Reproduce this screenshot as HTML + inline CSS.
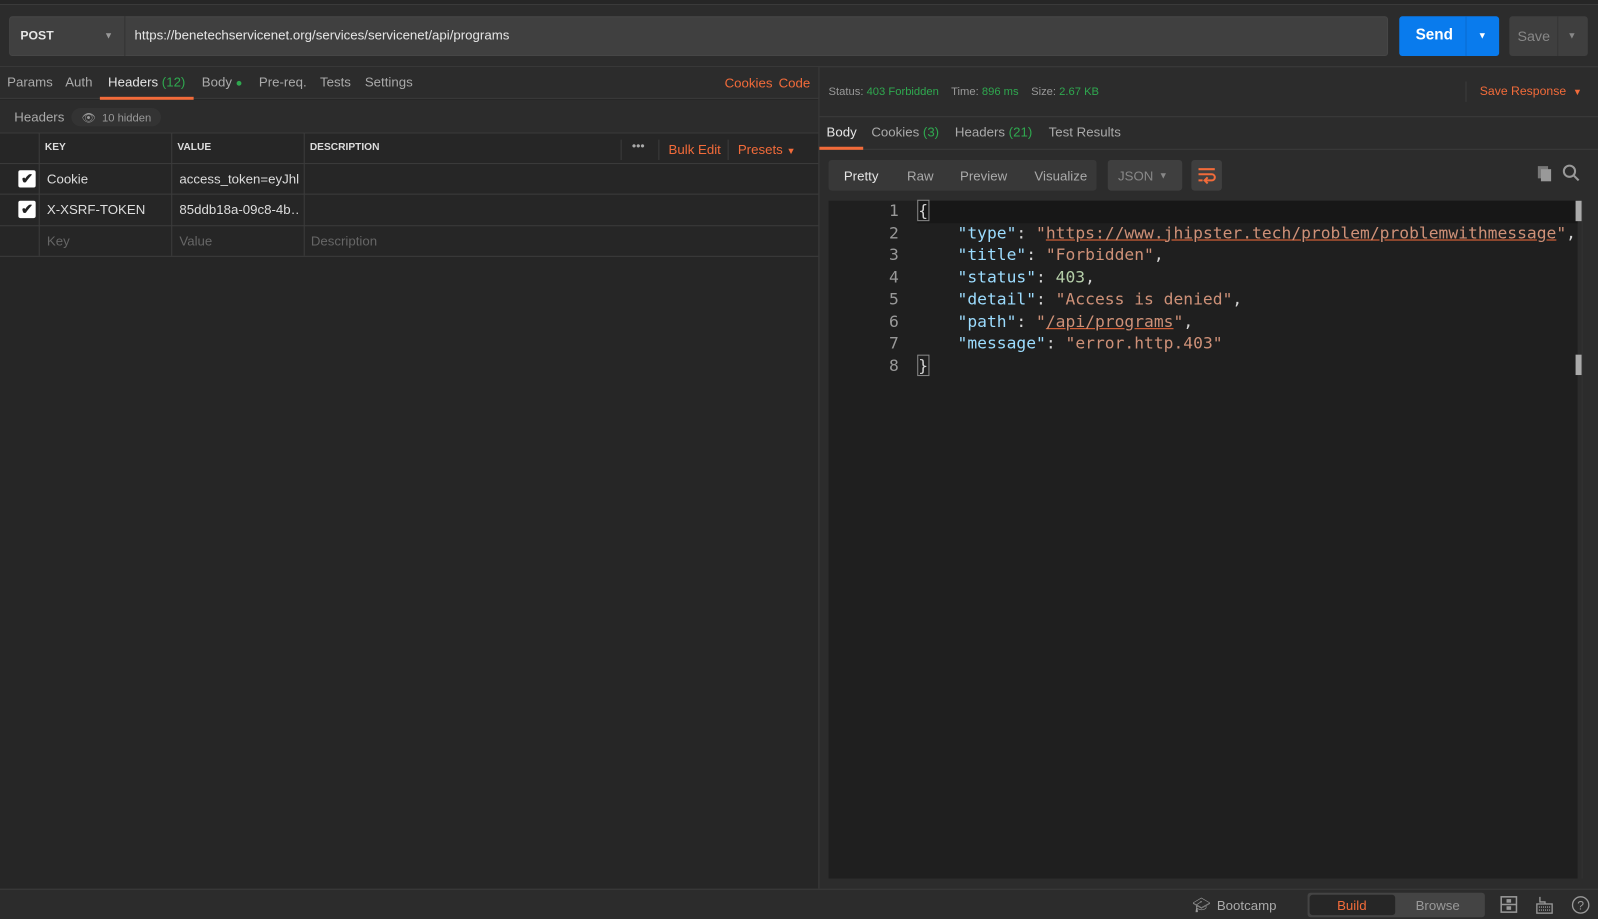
<!DOCTYPE html>
<html><head><style>
*{box-sizing:border-box;margin:0;padding:0}
html,body{width:1598px;height:919px;overflow:hidden;background:#2c2c2c}
#w{width:1568px;height:902px;transform:scale(1.01913);transform-origin:0 0;position:relative;font-family:"Liberation Sans",sans-serif;font-size:13px;color:#d0d0d0}
.a{position:absolute}
.or{color:#f26b3a}.gr{color:#2fa84f}
.mono{font-family:"DejaVu Sans Mono","Liberation Mono",monospace}
</style></head><body><div id="w">
<div class="a" style="left:0;top:0;width:1568px;height:5px;background:#262626;border-bottom:1px solid #3c3c3c"></div>
<div class="a" style="left:9px;top:16px;width:1353px;height:39px;background:#404040;border-radius:3px;border:1px solid #464646"></div>
<div class="a" style="left:122px;top:16px;width:1px;height:39px;background:#333"></div>
<div class="a" style="left:20px;top:28px;font-weight:bold;font-size:12px;color:#e6e6e6">POST</div>
<div class="a" style="left:102px;top:30px;font-size:9px;color:#999">▼</div>
<div class="a" style="left:132px;top:27px;color:#e6e6e6;font-size:13px">https://benetechservicenet.org/services/servicenet/api/programs</div>
<div class="a" style="left:1373px;top:16px;width:98px;height:39px;background:#097bed;border-radius:3px"></div>
<div class="a" style="left:1438px;top:16px;width:1px;height:39px;background:#0a6bd0"></div>
<div class="a" style="left:1389px;top:26px;font-size:15px;font-weight:bold;color:#fff">Send</div>
<div class="a" style="left:1450px;top:30px;font-size:9px;color:#fff">▼</div>
<div class="a" style="left:1481px;top:16px;width:77px;height:39px;background:#3f3f3f;border-radius:3px"></div>
<div class="a" style="left:1528px;top:16px;width:1px;height:39px;background:#353535"></div>
<div class="a" style="left:1489px;top:27px;font-size:14px;color:#888">Save</div>
<div class="a" style="left:1538px;top:30px;font-size:9px;color:#888">▼</div>
<div class="a" style="left:0;top:65px;width:1568px;height:1px;background:#3c3c3c"></div>
<div class="a" style="left:0;top:66px;width:803px;height:806px;background:#262626"></div>
<div class="a" style="left:0;top:66px;width:803px;height:31px;background:#2c2c2c;border-bottom:1px solid #3c3c3c"></div>
<div class="a" style="left:7px;top:73px;color:#aaa">Params</div>
<div class="a" style="left:64px;top:73px;color:#aaa">Auth</div>
<div class="a" style="left:106px;top:73px;color:#e6e6e6">Headers <span class="gr">(12)</span></div>
<div class="a" style="left:98px;top:95px;width:92px;height:3px;background:#f26b3a"></div>
<div class="a" style="left:198px;top:73px;color:#aaa">Body <span class="gr" style="font-size:11px">●</span></div>
<div class="a" style="left:254px;top:73px;color:#aaa">Pre-req.</div>
<div class="a" style="left:314px;top:73px;color:#aaa">Tests</div>
<div class="a" style="left:358px;top:73px;color:#aaa">Settings</div>
<div class="a or" style="left:711px;top:74px">Cookies</div>
<div class="a or" style="left:764px;top:74px">Code</div>
<div class="a" style="left:0;top:98px;width:803px;height:32px;background:#2c2c2c"></div>
<div class="a" style="left:14px;top:107px;color:#aaa">Headers</div>
<div class="a" style="left:70px;top:106px;width:88px;height:18px;border-radius:9px;background:#333;color:#999;font-size:11px;padding:3px 0 0 10px">👁︎ &nbsp;10 hidden</div>
<div class="a" style="left:0;top:130px;width:803px;height:122px;border-top:1px solid #3c3c3c"></div>
<div class="a" style="left:0;top:160px;width:803px;height:1px;background:#3c3c3c"></div>
<div class="a" style="left:0;top:190px;width:803px;height:1px;background:#3c3c3c"></div>
<div class="a" style="left:0;top:221px;width:803px;height:1px;background:#3c3c3c"></div>
<div class="a" style="left:0;top:251px;width:803px;height:1px;background:#3c3c3c"></div>
<div class="a" style="left:38px;top:130px;width:1px;height:121px;background:#3c3c3c"></div>
<div class="a" style="left:168px;top:130px;width:1px;height:121px;background:#3c3c3c"></div>
<div class="a" style="left:298px;top:130px;width:1px;height:121px;background:#3c3c3c"></div>
<div class="a" style="left:44px;top:139px;font-size:10px;font-weight:bold;color:#ddd">KEY</div>
<div class="a" style="left:174px;top:139px;font-size:10px;font-weight:bold;color:#ddd">VALUE</div>
<div class="a" style="left:304px;top:139px;font-size:10px;font-weight:bold;color:#ddd">DESCRIPTION</div>
<div class="a" style="left:609px;top:137px;width:1px;height:20px;background:#3c3c3c"></div>
<div class="a" style="left:620px;top:136px;color:#aaa;font-size:12px">•••</div>
<div class="a" style="left:646px;top:137px;width:1px;height:20px;background:#3c3c3c"></div>
<div class="a or" style="left:656px;top:139px">Bulk Edit</div>
<div class="a" style="left:714px;top:137px;width:1px;height:20px;background:#3c3c3c"></div>
<div class="a or" style="left:724px;top:139px">Presets <span style="font-size:9px">▼</span></div>
<div class="a" style="left:18px;top:167px;width:17px;height:17px;background:#fff;border-radius:2px;color:#222;font-size:14px;font-weight:bold;text-align:center;line-height:17px">✔</div>
<div class="a" style="left:18px;top:197px;width:17px;height:17px;background:#fff;border-radius:2px;color:#222;font-size:14px;font-weight:bold;text-align:center;line-height:17px">✔</div>
<div class="a" style="left:46px;top:168px;color:#ddd">Cookie</div>
<div class="a" style="left:176px;top:168px;color:#ddd;width:118px;overflow:hidden;white-space:nowrap">access_token=eyJhl…</div>
<div class="a" style="left:46px;top:198px;color:#ddd">X-XSRF-TOKEN</div>
<div class="a" style="left:176px;top:198px;color:#ddd;width:118px;overflow:hidden;white-space:nowrap">85ddb18a-09c8-4b…</div>
<div class="a" style="left:46px;top:229px;color:#666">Key</div>
<div class="a" style="left:176px;top:229px;color:#666">Value</div>
<div class="a" style="left:305px;top:229px;color:#666">Description</div>
<div class="a" style="left:803px;top:66px;width:1px;height:806px;background:#3c3c3c"></div>
<div class="a" style="left:813px;top:84px;font-size:11px;color:#999">Status: <span class="gr">403 Forbidden</span>&nbsp;&nbsp;&nbsp; Time: <span class="gr">896 ms</span>&nbsp;&nbsp;&nbsp; Size: <span class="gr">2.67 KB</span></div>
<div class="a" style="left:1438px;top:80px;width:1px;height:20px;background:#3c3c3c"></div>
<div class="a or" style="left:1452px;top:82px;font-size:12px">Save Response &nbsp;<span style="font-size:9px">▼</span></div>
<div class="a" style="left:804px;top:114px;width:764px;height:1px;background:#3c3c3c"></div>
<div class="a" style="left:804px;top:146px;width:764px;height:1px;background:#3c3c3c"></div>
<div class="a" style="left:811px;top:122px;color:#e6e6e6">Body</div>
<div class="a" style="left:804px;top:144px;width:43px;height:3px;background:#f26b3a"></div>
<div class="a" style="left:855px;top:122px;color:#aaa">Cookies <span class="gr">(3)</span></div>
<div class="a" style="left:937px;top:122px;color:#aaa">Headers <span class="gr">(21)</span></div>
<div class="a" style="left:1029px;top:122px;color:#aaa">Test Results</div>
<div class="a" style="left:813px;top:157px;width:263px;height:30px;background:#383838;border-radius:3px"></div>
<div class="a" style="left:828px;top:165px;color:#e6e6e6">Pretty</div>
<div class="a" style="left:890px;top:165px;color:#aaa">Raw</div>
<div class="a" style="left:942px;top:165px;color:#aaa">Preview</div>
<div class="a" style="left:1015px;top:165px;color:#aaa">Visualize</div>
<div class="a" style="left:1087px;top:157px;width:73px;height:30px;background:#3f3f3f;border-radius:3px"></div>
<div class="a" style="left:1097px;top:165px;color:#888">JSON</div>
<div class="a" style="left:1137px;top:167px;font-size:9px;color:#888">▼</div>
<div class="a" style="left:1169px;top:157px;width:30px;height:30px;background:#3f3f3f;border-radius:3px"></div>
<svg class="a" style="left:1174px;top:162px" width="20" height="20" viewBox="0 0 20 20" fill="none" stroke="#f26b3a" stroke-width="2"><path d="M2 4h16M2 9h13a3 3 0 0 1 0 6H9M11 12l-3 3 3 3M2 15h4"/></svg>
<svg class="a" style="left:1508px;top:162px" width="16" height="16"><rect x="1" y="1" width="10" height="12" fill="#777"/><rect x="4" y="4" width="10" height="12" fill="#999"/></svg>
<svg class="a" style="left:1533px;top:161px" width="17" height="17" fill="none" stroke="#999" stroke-width="2"><circle cx="7" cy="7" r="5.5"/><path d="M11 11l5 5"/></svg>
<div class="a" style="left:813px;top:197px;width:735px;height:665px;background:#1f1f1f"></div>
<div class="a" style="left:900px;top:197px;width:648px;height:22px;background:#171717"></div>
<div class="a" style="left:1546px;top:197px;width:6px;height:20px;background:#aaa"></div>
<div class="a" style="left:1546px;top:348px;width:6px;height:20px;background:#aaa"></div>
<div class="a" style="left:1552px;top:197px;width:1px;height:665px;background:#333"></div>
<pre class="a mono" style="left:840px;top:196px;font-size:16px;line-height:21.7px;color:#999;text-align:right;width:42px">1
2
3
4
5
6
7
8</pre>
<pre class="a mono" style="left:901px;top:196px;font-size:16px;line-height:21.7px;color:#d4d4d4"><span style="outline:1px solid #888">{</span>
    <span style="color:#9cdcfe">"type"</span>: <span style="color:#ce9178">"<u style="text-decoration-color:#f26b3a">https://www.jhipster.tech/problem/problemwithmessage</u>"</span>,
    <span style="color:#9cdcfe">"title"</span>: <span style="color:#ce9178">"Forbidden"</span>,
    <span style="color:#9cdcfe">"status"</span>: <span style="color:#b5cea8">403</span>,
    <span style="color:#9cdcfe">"detail"</span>: <span style="color:#ce9178">"Access is denied"</span>,
    <span style="color:#9cdcfe">"path"</span>: <span style="color:#ce9178">"<u style="text-decoration-color:#f26b3a">/api/programs</u>"</span>,
    <span style="color:#9cdcfe">"message"</span>: <span style="color:#ce9178">"error.http.403"</span>
<span style="outline:1px solid #888">}</span></pre>
<div class="a" style="left:0;top:872px;width:1568px;height:30px;background:#2c2c2c;border-top:1px solid #3c3c3c"></div>
<div class="a" style="left:1170px;top:880px;color:#999;font-size:14px">🎓︎</div>
<div class="a" style="left:1194px;top:881px;color:#aaa">Bootcamp</div>
<div class="a" style="left:1283px;top:876px;width:174px;height:24px;background:#444;border-radius:3px"></div>
<div class="a" style="left:1285px;top:878px;width:84px;height:20px;background:#262626;border-radius:3px"></div>
<div class="a or" style="left:1312px;top:881px">Build</div>
<div class="a" style="left:1389px;top:881px;color:#999">Browse</div>
<svg class="a" style="left:1472px;top:879px" width="18" height="18" fill="none" stroke="#999" stroke-width="1.5"><rect x="1" y="1" width="15" height="15"/><path d="M1 8.5h15"/><rect x="7" y="4" width="3" height="2" fill="#999"/><rect x="7" y="11" width="3" height="2" fill="#999"/></svg>
<svg class="a" style="left:1507px;top:879px" width="18" height="18" fill="none" stroke="#999" stroke-width="1.3"><path d="M4 1v5h5v2"/><rect x="1" y="8" width="15" height="9"/><path d="M3 11h11M3 14h11" stroke-dasharray="1 1"/></svg>
<svg class="a" style="left:1542px;top:879px" width="18" height="18" fill="none" stroke="#999" stroke-width="1.3"><circle cx="9" cy="9" r="8"/><text x="9" y="13.5" font-size="12" fill="#999" stroke="none" text-anchor="middle" font-family="Liberation Sans">?</text></svg>
</div></body></html>
